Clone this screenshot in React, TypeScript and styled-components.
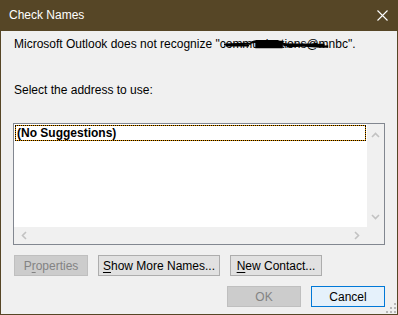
import * as React from 'react';
import styled, { createGlobalStyle } from 'styled-components';

const GlobalStyle = createGlobalStyle`
  html, body {
    margin: 0;
    padding: 0;
    background: #f0f0f0;
  }
  body {
    font-family: "Liberation Sans", Arial, sans-serif;
    font-size: 12px;
    color: #000;
  }
`;

type ButtonProps = {
  $width: number;
  $variant?: 'normal' | 'disabled' | 'default';
};

const App: React.FC = () => {
  return (
    <>
      <GlobalStyle />
      <Styled.Window>
        <Styled.TitleBar>
          <Styled.Title>Check Names</Styled.Title>
          <Styled.Close width={11} height={11} viewBox="0 0 11 11">
            <path d="M0.5 0.5 L10.5 10.5 M10.5 0.5 L0.5 10.5" stroke="#fff" strokeWidth={1.1} />
          </Styled.Close>
        </Styled.TitleBar>
        <Styled.Client>
          <Styled.Message>
            Microsoft Outlook does not recognize "
            <Styled.Redacted>
              communications@mnbc
              <Styled.Scribble viewBox="0 0 118 10" preserveAspectRatio="none">
                <path
                  d="M0 5 L30 4 M2 6 L28 6 M30 3 C40 -1 60 -1 66 4 C72 8 84 6 96 6 L104 4 M36 2 L64 2 L64 8 L36 8 Z M66 6 C80 3 92 9 116 7 M70 7 L112 5"
                  stroke="#000"
                  strokeWidth={2.4}
                  fill="#000"
                />
              </Styled.Scribble>
            </Styled.Redacted>
            ".
          </Styled.Message>
          <Styled.Prompt>Select the address to use:</Styled.Prompt>
          <Styled.List>
            <Styled.Items>
              <Styled.Item>(No Suggestions)</Styled.Item>
            </Styled.Items>
            <Styled.VScroll>
              <Chevron d="M1 5 L4.5 1.5 L8 5" />
              <Chevron d="M1 1 L4.5 4.5 L8 1" />
            </Styled.VScroll>
            <Styled.HScroll>
              <Chevron d="M5 1 L1.5 4.5 L5 8" $w={6} $h={9} />
              <Chevron d="M1 1 L4.5 4.5 L1 8" $w={6} $h={9} />
            </Styled.HScroll>
            <Styled.Corner />
          </Styled.List>
          <Styled.ButtonRow>
            <Styled.Button $width={74} $variant="disabled">
              P<u>r</u>operties
            </Styled.Button>
            <Styled.Button $width={122}>
              <u>S</u>how More Names...
            </Styled.Button>
            <Styled.Button $width={92}>
              <u>N</u>ew Contact...
            </Styled.Button>
          </Styled.ButtonRow>
          <Styled.ActionRow>
            <Styled.Button $width={74} $variant="disabled">
              OK
            </Styled.Button>
            <Styled.Button $width={74} $variant="default">
              Cancel
            </Styled.Button>
          </Styled.ActionRow>
          <Styled.Grip width={10} height={10} viewBox="0 0 10 10">
            {[
              [8, 0],
              [8, 4],
              [4, 4],
              [8, 8],
              [4, 8],
              [0, 8],
            ].map(([x, y]) => (
              <rect key={`${x}-${y}`} x={x} y={y} width={2} height={2} fill="#b8b8b8" />
            ))}
          </Styled.Grip>
        </Styled.Client>
      </Styled.Window>
    </>
  );
};

const Chevron: React.FC<{ d: string; $w?: number; $h?: number }> = ({ d, $w = 9, $h = 6 }) => (
  <svg width={$w} height={$h} viewBox={`0 0 ${$w} ${$h}`}>
    <path d={d} stroke="#c2c2c2" strokeWidth={1.6} fill="none" />
  </svg>
);

const buttonColors = {
  normal: { bg: '#e1e1e1', border: '#adadad', color: '#000' },
  disabled: { bg: '#cccccc', border: '#bfbfbf', color: '#838383' },
  default: { bg: '#e5f1fb', border: '#0078d7', color: '#000' },
};

const Styled = {
  Window: styled.div`
    width: 398px;
    height: 315px;
    box-sizing: border-box;
    padding: 0 1px 1px 1px;
    background: #564626;
    display: flex;
    flex-direction: column;
  `,
  TitleBar: styled.div`
    height: 31px;
    flex: none;
    display: flex;
    align-items: center;
    justify-content: space-between;
    padding: 0 9px 0 8px;
  `,
  Title: styled.div`
    color: #fff;
    font-size: 12px;
    line-height: 15px;
    margin-top: -1px;
  `,
  Close: styled.svg`
    display: block;
    margin-top: -1px;
  `,
  Client: styled.div`
    position: relative;
    flex: 1;
    background: #f0f0f0;
    padding: 6px 12px 0 12px;
    display: flex;
    flex-direction: column;
  `,
  Message: styled.div`
    line-height: 15px;
    padding-left: 1px;
    white-space: nowrap;
  `,
  Redacted: styled.span`
    position: relative;
  `,
  Scribble: styled.svg`
    position: absolute;
    left: 4px;
    top: 3px;
    width: 106px;
    height: 9px;
  `,
  Prompt: styled.div`
    margin-top: 31px;
    line-height: 15px;
    padding-left: 1px;
  `,
  List: styled.div`
    margin-top: 25px;
    height: 122px;
    box-sizing: border-box;
    border: 1px solid #828790;
    display: grid;
    grid-template-columns: 1fr 17px;
    grid-template-rows: 1fr 17px;
  `,
  Items: styled.div`
    background: #fff;
    padding: 1px;
  `,
  Item: styled.div`
    height: 16px;
    box-sizing: border-box;
    border: 1px dotted #000;
    background: linear-gradient(#fff, #fff) padding-box, #e59400 border-box;
    font-weight: bold;
    line-height: 14px;
    padding-left: 1px;
  `,
  VScroll: styled.div`
    background: #f0f0f0;
    display: flex;
    flex-direction: column;
    justify-content: space-between;
    align-items: center;
    padding: 8px 0 7px;
    svg {
      display: block;
    }
  `,
  HScroll: styled.div`
    background: #f0f0f0;
    display: flex;
    justify-content: space-between;
    align-items: center;
    padding: 0 7px 0 7px;
    svg {
      display: block;
    }
  `,
  Corner: styled.div`
    background: #f0f0f0;
  `,
  ButtonRow: styled.div`
    margin-top: 10px;
    padding-left: 1px;
    display: flex;
    gap: 10px;
  `,
  ActionRow: styled.div`
    margin-top: 10px;
    display: flex;
    justify-content: flex-end;
    gap: 10px;
  `,
  Button: styled.div<ButtonProps>`
    width: ${(p) => p.$width}px;
    height: 21px;
    box-sizing: border-box;
    display: flex;
    align-items: center;
    justify-content: center;
    font-size: 12px;
    background: ${(p) => buttonColors[p.$variant ?? 'normal'].bg};
    border: 1px solid ${(p) => buttonColors[p.$variant ?? 'normal'].border};
    color: ${(p) => buttonColors[p.$variant ?? 'normal'].color};
    u {
      text-underline-offset: 2px;
    }
  `,
  Grip: styled.svg`
    position: absolute;
    right: 1px;
    bottom: 1px;
  `,
};

export default App;
